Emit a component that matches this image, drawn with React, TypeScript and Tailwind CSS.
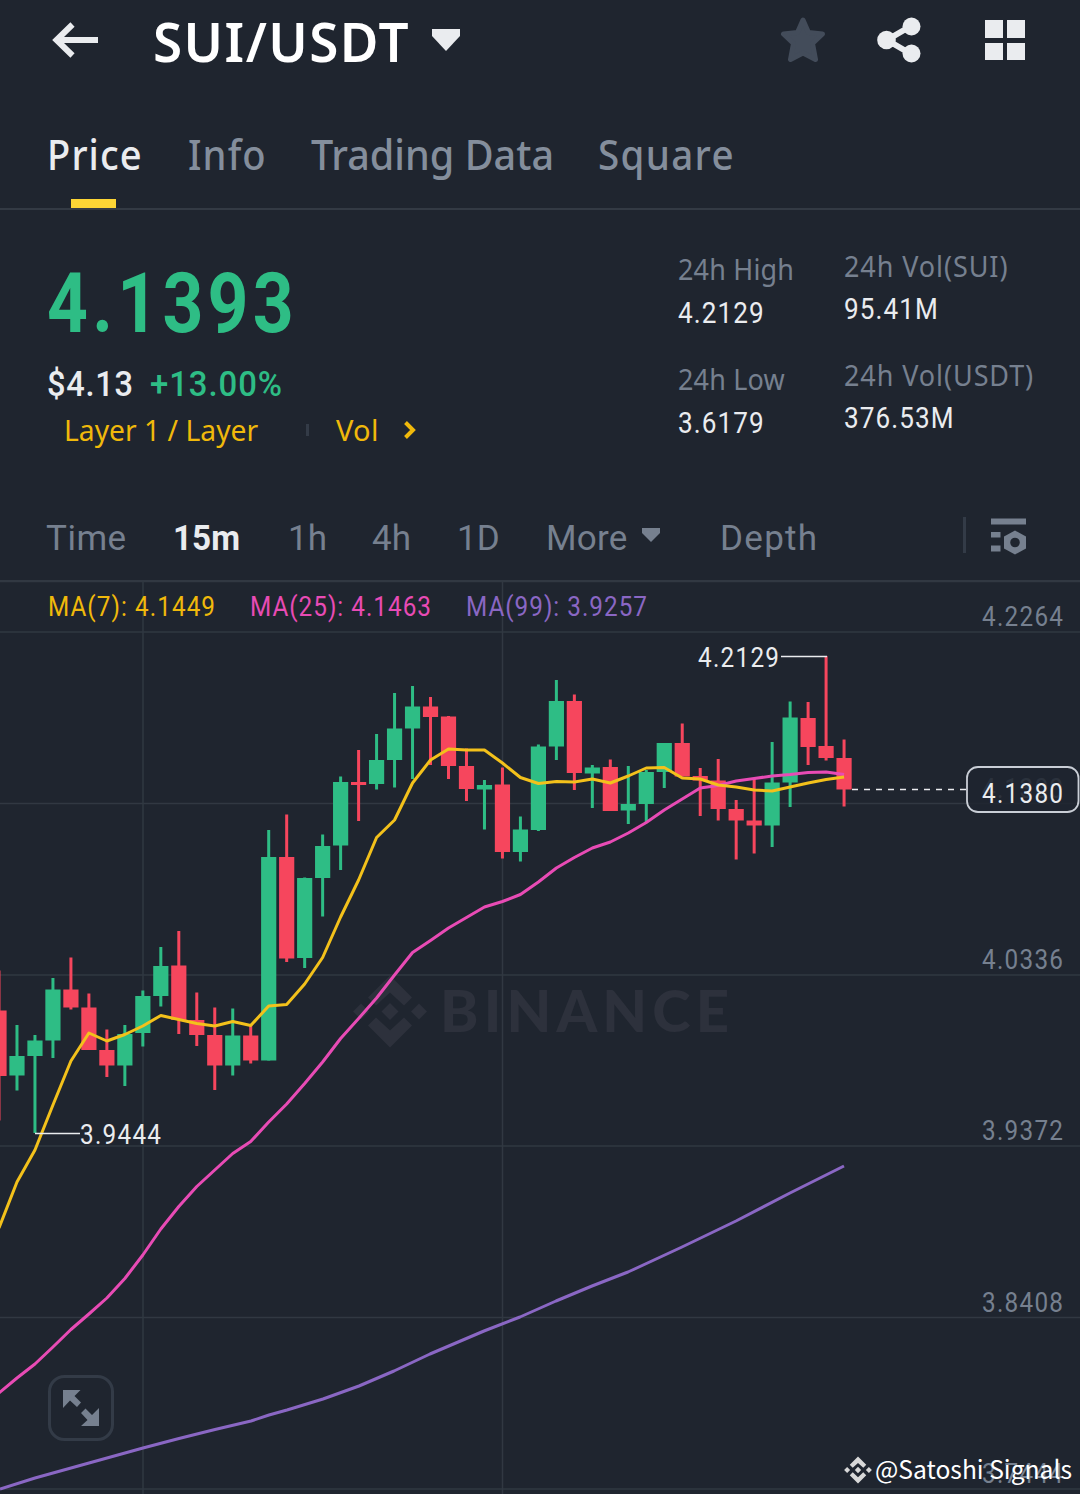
import type { ReactNode } from "react";

// [direction, high, body top, body bottom, low]
type Candle = ["u" | "d", number, number, number, number];

const CANDLES: Candle[] = [
  ["d", 970.5, 1010.5, 1076, 1120.5],
  ["u", 1025, 1056, 1075.5, 1090.5],
  ["u", 1035, 1040.5, 1056, 1133],
  ["u", 978, 989.5, 1040.5, 1058],
  ["d", 957.5, 989.5, 1007.5, 1009.5],
  ["d", 993.5, 1007.5, 1050, 1050],
  ["d", 1029.5, 1050, 1065.5, 1077],
  ["u", 1025, 1034, 1065.5, 1086],
  ["u", 990.5, 996, 1033, 1046.5],
  ["u", 947, 966, 996, 1006.5],
  ["d", 931, 965.5, 1020, 1034],
  ["d", 992.5, 1020, 1035, 1046],
  ["d", 1007.5, 1035, 1065.5, 1090],
  ["u", 1008.5, 1035.5, 1065.5, 1075.5],
  ["d", 1025, 1035.5, 1060.5, 1063.5],
  ["u", 830, 857, 1060.5, 1060.5],
  ["d", 814.5, 857, 958.5, 962],
  ["u", 877.5, 878, 958, 968],
  ["u", 834.5, 846, 878, 916.5],
  ["u", 776.5, 782, 845.5, 870],
  ["d", 750, 782, 785, 821],
  ["u", 734, 760, 784, 789.5],
  ["u", 693, 728.5, 760, 787.5],
  ["u", 686, 706.5, 728.5, 779],
  ["d", 697, 706.5, 717, 765],
  ["d", 716, 716.5, 766, 779],
  ["d", 748.5, 766, 789, 801],
  ["u", 780, 785, 789.5, 829.5],
  ["d", 767.5, 784.5, 852, 858.5],
  ["u", 816.5, 829.5, 852, 861.5],
  ["u", 744.5, 746.5, 830, 831],
  ["u", 680, 701, 746.5, 760],
  ["d", 694.5, 701, 773, 790],
  ["u", 765, 767.5, 773.5, 808],
  ["d", 759.5, 767, 811, 811],
  ["u", 766, 804, 810.5, 824],
  ["u", 770, 772, 804, 822.5],
  ["u", 743, 743, 772, 788],
  ["d", 723.5, 743, 776.5, 776.5],
  ["d", 768, 776, 780.5, 816],
  ["d", 759, 780.5, 809, 820.5],
  ["d", 800, 809, 820.5, 859.5],
  ["d", 778, 820.5, 825.5, 853.5],
  ["u", 742, 782.5, 825.5, 847],
  ["u", 701.5, 717.5, 782.5, 807],
  ["d", 702, 718, 747, 765],
  ["d", 656, 746, 758, 760.5],
  ["d", 739.5, 758, 789.5, 806.5],
];

const MA7 = [
  1228, 1182, 1150, 1105, 1061, 1033, 1041, 1034.5, 1026, 1015.5, 1019.5, 1023.5, 1026, 1021.5,
  1025.5, 1006, 1004.5, 984, 957.5, 917, 880, 837.5, 820, 783, 760, 749, 750, 750, 763, 777.5,
  783.5, 781.5, 782, 779, 783, 776, 768, 767.5, 778, 779, 785, 787, 790, 791, 787, 783, 779.5, 777,
];

const MA25 = [
  1393, 1378, 1364, 1347, 1329.5, 1314, 1298, 1278.5, 1255, 1229, 1206.5, 1186.5, 1170, 1153.5,
  1141.5, 1122, 1104, 1083.5, 1062, 1038.5, 1018.5, 998, 975, 952.5, 940.5, 928, 917.5, 907, 901.5,
  894.5, 882, 868, 857.5, 848, 842, 833, 822.5, 810, 799, 788, 785.5, 781, 778.5, 776, 774.5, 772.5,
  772, 774.5,
];

const MA99 =
  "0,1489 35,1478 89,1463 143,1448 179,1438.5 215,1429.5 251,1421 269,1415 287,1410 323,1399 359,1386 394,1371 430,1354 484,1331 520,1317 556,1301 592,1286 628,1272 682,1247 736,1221 790,1193 844,1166";

const AXIS = [
  { price: "4.2264", y: 632 },
  { price: "4.1300", y: 803.5 },
  { price: "4.0336", y: 975 },
  { price: "3.9372", y: 1146 },
  { price: "3.8408", y: 1317.5 },
  { price: "3.7444", y: 1489 },
];

const candleX = (i: number) => -1 + i * 17.98;
const toPoints = (values: number[]) => values.map((y, i) => `${candleX(i)},${y}`).join(" ");

const LABEL = "font-['Noto_Sans',sans-serif]";
const DIGIT = "font-[Roboto,sans-serif]";

// Digits are drawn slightly condensed, then spaced out to fill the width.
function Label({
  x,
  y,
  width,
  className,
  children,
}: {
  x: number;
  y: number;
  width: number;
  className: string;
  children: ReactNode;
}) {
  return (
    <text
      transform={`translate(${x} ${y}) scale(0.9 1)`}
      textLength={width / 0.9}
      lengthAdjust="spacing"
      className={`font-[Roboto,sans-serif] text-[27px] ${className}`}
    >
      {children}
    </text>
  );
}

function BinanceMark() {
  return (
    <>
      <path d="M-22 -14 L0 -36 L22 -14 L14 -6 L0 -19 L-14 -6Z" />
      <path d="M-22 14 L0 36 L22 14 L14 6 L0 19 L-14 6Z" />
      <path d="M0 -8.5 L8.5 0 L0 8.5 L-8.5 0Z" />
      <path d="M-29 -8 L-21 0 L-29 8 L-37 0Z" />
      <path d="M29 -8 L37 0 L29 8 L21 0Z" />
    </>
  );
}

function Header() {
  return (
    <header className="flex h-20 items-center pl-[52px] pr-[55px]">
      <svg width="46" height="38" viewBox="0 0 46 38" fill="none" stroke="#eaecef" strokeWidth="6">
        <path d="M4 19H46" />
        <path d="M20.5 3.5L4.5 19L20.5 34.5" />
      </svg>
      <h1
        className={`ml-[55px] w-[279px] whitespace-nowrap pt-0.5 text-[54px] font-semibold leading-[80px] text-white ${LABEL}`}
      >
        <span className="inline-block origin-left scale-x-[0.98] tracking-[1.5px]">SUI/USDT</span>
      </h1>
      <svg width="28" height="22" viewBox="0 0 28 22" fill="#eaecef">
        <path d="M0 0H28V7L14 22L0 7Z" />
      </svg>
      <div className="ml-auto flex items-center">
        <svg width="46" height="48" viewBox="0 0 46 48">
          <path
            d="M23 4L28.5 16.5L42.5 18L32.5 27.5L35.5 43.5L23 37L10.5 43.5L13.5 27.5L3.5 18L17.5 16.5Z"
            fill="#434c5a"
            stroke="#434c5a"
            strokeWidth="5"
            strokeLinejoin="round"
          />
        </svg>
        <svg className="ml-[51px]" width="44" height="46" viewBox="0 0 44 46" fill="#eaecef">
          <path d="M34 9L10 23L34 37" fill="none" stroke="#eaecef" strokeWidth="6" />
          <circle cx="9.5" cy="23" r="9.3" />
          <circle cx="34.5" cy="9.5" r="9" />
          <circle cx="34.5" cy="36.5" r="9" />
        </svg>
        <div className="ml-16 grid grid-cols-2 gap-x-1 gap-y-[5px]">
          <span className="h-[17.5px] w-[18px] bg-[#eaecef]" />
          <span className="h-[17.5px] w-[18px] bg-[#eaecef]" />
          <span className="h-[17.5px] w-[18px] bg-[#eaecef]" />
          <span className="h-[17.5px] w-[18px] bg-[#eaecef]" />
        </div>
      </div>
    </header>
  );
}

function Tabs() {
  return (
    <nav
      className={`grid h-[130px] grid-cols-[141px_123px_287px_200px] border-b-2 border-[#333a44] pl-[47px] pt-11 text-[41px] font-medium leading-[60px] text-[#848e9c] ${LABEL}`}
    >
      <div className="relative text-[#eaecef]">
        <span className="inline-block origin-left scale-x-[0.93] tracking-[1.2px]">Price</span>
        <span className="absolute bottom-0 left-6 h-[9px] w-[45px] bg-[#fcd535]" />
      </div>
      <span className="inline-block origin-left scale-x-[0.93] tracking-[1.2px]">Info</span>
      <span className="inline-block origin-left scale-x-[0.965] whitespace-nowrap">
        Trading Data
      </span>
      <span className="inline-block origin-left scale-x-[0.94] tracking-[1.4px]">Square</span>
    </nav>
  );
}

function Stat({ label, value, wide }: { label: string; value: string; wide?: boolean }) {
  return (
    <div className="whitespace-nowrap text-[29px] leading-10">
      <div className={`text-[#76808f] ${LABEL} ${wide ? "tracking-[1px]" : "tracking-[0.2px]"}`}>
        <span className="inline-block origin-left scale-x-[0.93]">{label}</span>
      </div>
      <div className={`text-[#eaecef] ${DIGIT} ${wide ? "mt-[3px]" : "mt-1"}`}>
        <span className="inline-block origin-left scale-x-[0.9] tracking-[1.2px]">{value}</span>
      </div>
    </div>
  );
}

function Summary() {
  return (
    <section className="flex h-[286px] pl-[47px]">
      <div className="w-[631px] pt-[49px]">
        <div className={`text-[84px] font-bold leading-[90px] text-[#2ebd85] ${DIGIT}`}>
          <span className="inline-block origin-left scale-x-[0.85] tracking-[5px]">4.1393</span>
        </div>
        <div className={`mt-[13px] flex text-[35px] font-medium leading-[46px] ${DIGIT}`}>
          <span className="w-[103px] text-[#eaecef]">
            <span className="inline-block origin-left scale-x-[0.93] tracking-[0.8px]">$4.13</span>
          </span>
          <span className="inline-block origin-left scale-x-[0.94] tracking-[1px] text-[#2ebd85]">
            +13.00%
          </span>
        </div>
        <div
          className={`mt-0.5 flex items-center pl-[17px] text-[29px] leading-10 text-[#f0b90b] ${LABEL}`}
        >
          <span className="w-[242px] whitespace-nowrap">
            <span className="inline-block origin-left scale-x-[0.975]">Layer 1 / Layer</span>
          </span>
          <span className="h-3 w-[3px] bg-[#333b47]" />
          <span className="ml-[27px] w-[68px]">
            <span className="inline-block origin-left tracking-[0.3px]">Vol</span>
          </span>
          <svg width="12" height="18" viewBox="0 0 12 18" fill="none" stroke="#f0b90b" strokeWidth="4">
            <path d="M1.5 1.5L9 9L1.5 16.5" />
          </svg>
        </div>
      </div>
      <div className="flex w-[166px] flex-col gap-[26px] pt-[39px]">
        <Stat label="24h High" value="4.2129" />
        <Stat label="24h Low" value="3.6179" />
      </div>
      <div className="flex flex-col gap-[26px] pt-9">
        <Stat label="24h Vol(SUI)" value="95.41M" wide />
        <Stat label="24h Vol(USDT)" value="376.53M" wide />
      </div>
    </section>
  );
}

function Intervals() {
  return (
    <div
      className={`flex h-[84px] items-center pl-[46px] text-[35px] leading-[84px] text-[#76808f] ${DIGIT}`}
    >
      <span className="w-[127px] pt-0.5 tracking-[0.5px]">Time</span>
      <span className="w-[115px] pt-0.5 font-bold text-[#eaecef]">
        <span className="inline-block origin-left scale-x-[0.95]">15m</span>
      </span>
      <span className="w-[84px] pt-0.5">1h</span>
      <span className="w-[85px] pt-0.5">4h</span>
      <span className="w-[89px] pt-0.5">1D</span>
      <span className="w-[96px] pt-0.5 tracking-[0.2px]">More</span>
      <svg width="18" height="14" viewBox="0 0 18 14" fill="#76808f" className="-mt-1.5">
        <path d="M0 0H18V5L9 14L0 5Z" />
      </svg>
      <span className="ml-[60px] w-[243px] pt-0.5 tracking-[1.3px]">Depth</span>
      <span className="-mt-1.5 h-9 w-[3px] bg-[#333b47]" />
      <svg width="36" height="37" viewBox="0 0 36 37" className="-mt-1 ml-[25px]" fill="#76808f">
        <path d="M0 0.5H35V6.5H0Z" />
        <path d="M0 14H9.5V19.5H0Z" />
        <path d="M0 27.5H9.5V33.5H0Z" />
        <path
          fillRule="evenodd"
          d="M24 12.5L35 18.5V30.5L24 36.5L13 30.5V18.5ZM24 19.7A4.8 4.8 0 1 0 24 29.3A4.8 4.8 0 1 0 24 19.7Z"
        />
      </svg>
    </div>
  );
}

function Chart() {
  return (
    <svg width="1080" height="914" viewBox="0 580 1080 914" className="block">
      <g fill="#2d313c">
        <g transform="translate(390 1011.5)">
          <BinanceMark />
        </g>
        <text
          x="440"
          y="1032"
          textLength="289"
          lengthAdjust="spacing"
          className="font-[Lato,sans-serif] text-[58px] font-black"
        >
          BINANCE
        </text>
      </g>

      <g stroke="#313842" strokeWidth="1.5">
        <path d="M0 581H1080" strokeWidth="2.5" />
        {AXIS.map(({ y }) => (
          <path key={y} d={`M0 ${y}H1080`} />
        ))}
        <path d="M143 581V1494M502.5 581V1494" />
      </g>

      {AXIS.map(({ price, y }) => (
        <Label key={price} x={982} y={y - 6} width={81} className="fill-[#76808f]">
          {price}
        </Label>
      ))}

      <Label x={48} y={616} width={167} className="fill-[#f0b90b]">
        MA(7): 4.1449
      </Label>
      <Label x={250} y={616} width={181} className="fill-[#e84bb5]">
        MA(25): 4.1463
      </Label>
      <Label x={466} y={616} width={181} className="fill-[#8a67c4]">
        MA(99): 3.9257
      </Label>

      {CANDLES.map(([dir, high, top, bottom, low], i) => (
        <g key={i} fill={dir === "u" ? "#2ebd85" : "#f6465d"}>
          <rect x={candleX(i) - 1.5} y={high} width="3" height={low - high} />
          <rect x={candleX(i) - 7.6} y={top} width="15.2" height={bottom - top} />
        </g>
      ))}

      <g fill="none" strokeWidth="3" strokeLinejoin="round">
        <polyline points={MA99} stroke="#8a67c4" />
        <polyline points={toPoints(MA25)} stroke="#e84bb5" />
        <polyline points={toPoints(MA7)} stroke="#f3c11b" />
      </g>

      <g stroke="#eaecef" strokeWidth="1.5" fill="none">
        <path d="M781 656.5H827" />
        <path d="M35 1133.5H80" />
        <path d="M852 789.5H967" strokeDasharray="6 6" />
      </g>
      <Label x={698} y={667} width={81} className="fill-[#eaecef]">
        4.2129
      </Label>
      <Label x={80} y={1144} width={81} className="fill-[#eaecef]">
        3.9444
      </Label>

      <rect
        x="967"
        y="767"
        width="111.5"
        height="45"
        rx="11"
        fill="#1f252f"
        fillOpacity="0.85"
        stroke="#c9ced6"
        strokeWidth="1.8"
      />
      <Label x={982} y={803} width={81} className="fill-[#eaecef]">
        4.1380
      </Label>

      <rect
        x="49.5"
        y="1376.5"
        width="63"
        height="63"
        rx="15"
        fill="#1f252f"
        stroke="#333b47"
        strokeWidth="3"
      />
      <g fill="#76808f">
        <path d="M63 1390H80.5L74.5 1396L81 1402.5L77 1407L70 1400.5L63 1408Z" />
        <path d="M99 1426H81L87.5 1420L81 1413L85.5 1408.5L92 1415L99 1408Z" />
      </g>

      <g transform="translate(858 1470) scale(0.375)" fill="#d8d8d8">
        <BinanceMark />
      </g>
      <text
        x="875"
        y="1479"
        textLength="197"
        lengthAdjust="spacingAndGlyphs"
        className="fill-white font-['Noto_Sans_CJK_SC',sans-serif] text-[25px]"
      >
        @Satoshi Signals
      </text>
    </svg>
  );
}

export default function App() {
  return (
    <main className="h-[1494px] w-[1080px] overflow-hidden bg-[#1f252f]">
      <Header />
      <Tabs />
      <Summary />
      <Intervals />
      <Chart />
    </main>
  );
}
